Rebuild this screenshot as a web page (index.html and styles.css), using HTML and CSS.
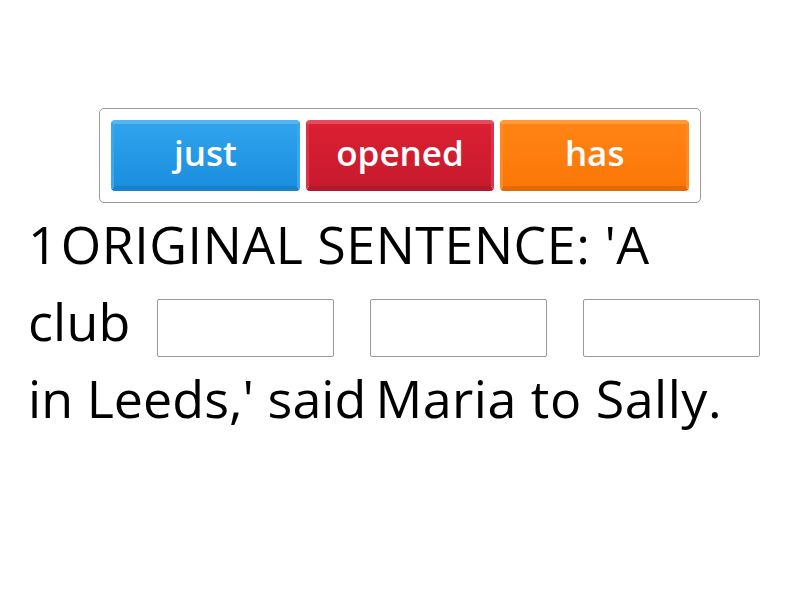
FILE: index.html
```html
<!DOCTYPE html>
<html>
<head>
<meta charset="utf-8">
<link rel="stylesheet" href="styles.css">
</head>
<body>
<div class="page">
  <div class="tray">
    <div class="tile blue">just</div>
    <div class="tile red">opened</div>
    <div class="tile orange">has</div>
  </div>
  <div class="sentence">
    <div class="row">
      <span class="num">1</span><span class="tight">ORIGINAL SENTENCE: 'A</span>
    </div>
    <div class="row">
      <span class="club">club</span>
      <span class="slots">
        <span class="slot"></span><span class="slot"></span><span class="slot"></span>
      </span>
    </div>
    <div class="row last">
      <span class="wide first">in Leeds,' said</span><span class="wide">Maria to Sally.</span>
    </div>
  </div>
</div>
</body>
</html>
```
FILE: styles.css
```css
html, body { margin: 0; padding: 0; background: #fff; }
body { font-family: "Open Sans", "Liberation Sans", sans-serif; color: #000; }
.page { width: 800px; height: 600px; padding-top: 108px; box-sizing: border-box; }
.tray {
  margin-left: 99px;
  width: 602px;
  height: 95px;
  box-sizing: border-box;
  border: 1px solid #9a9a9a;
  border-radius: 5px;
  padding: 11px;
  display: flex;
  gap: 6px;
}
.tile {
  width: 189px;
  height: 71px;
  box-sizing: border-box;
  border-radius: 4px;
  border-style: solid;
  border-width: 4px 3px 5px 3px;
  color: #fff;
  font-weight: 600;
  font-size: 35px;
  display: flex;
  align-items: center;
  justify-content: center;
  padding-bottom: 6px;
}
.blue { background: linear-gradient(#2fa3ec, #1b8fdf); border-color: #55b5f0 #3aa6ec #1681cc #3aa6ec; }
.red { background: linear-gradient(#dc1f33, #c81a2d); border-color: #e44d5c #dc3345 #b3192a #dc3345; }
.orange { background: linear-gradient(#ff8414, #fc7708); border-color: #ff9a3a #ff8a24 #e26a05 #ff8a24; }
.sentence {
  margin-left: 28px;
  margin-top: 2px;
  font-size: 52px;
  line-height: 77px;
}
.row { display: flex; align-items: flex-start; height: 77px; }
.num { margin-right: 3px; }
.tight { letter-spacing: 0.5px; }
.club { letter-spacing: 0.2px; margin-right: 26px; }
.slots { display: flex; gap: 36px; margin-top: 17px; }
.slot {
  display: block;
  width: 177px;
  height: 58px;
  box-sizing: border-box;
  border: 1px solid #9a9a9a;
  border-radius: 2px;
}
.wide { letter-spacing: 0.5px; margin-right: 9px; }
.wide.first { letter-spacing: 0.05px; }
```
